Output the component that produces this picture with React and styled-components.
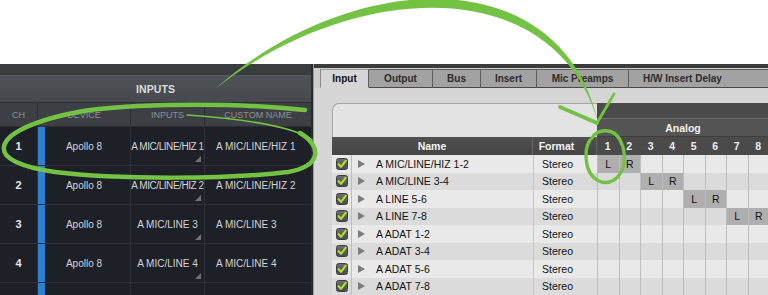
import React from "react";
import styled, { createGlobalStyle } from "styled-components";

const Global = createGlobalStyle`
  html, body { margin: 0; padding: 0; background: #ffffff; }
  body { font-family: "Liberation Sans", Arial, Helvetica, sans-serif; }
  #root { width: 768px; height: 295px; overflow: hidden; position: relative; }
  * { box-sizing: border-box; }
`;

const Page = styled.div`
  width: 768px;
  height: 295px;
  display: flex;
  flex-direction: column;
  position: relative;
  background: #ffffff;
`;

const WhiteSpace = styled.div`
  height: 64px;
  flex: none;
`;

const Main = styled.div`
  flex: 1;
  display: flex;
  min-height: 0;
`;

/* ---------- Left panel ---------- */
const LeftPanel = styled.div`
  width: 313px;
  flex: none;
  display: flex;
  flex-direction: column;
  background: #1d2027;
  border-right: 2px solid #2a2c30;
  overflow: hidden;
`;

const LeftTopBar = styled.div`
  height: 11px;
  flex: none;
  background: #3a3d40;
`;

const PanelTitle = styled.div`
  height: 28px;
  flex: none;
  display: flex;
  align-items: center;
  justify-content: center;
  background: linear-gradient(#4e5155, #46494d);
  border-top: 1px solid #55585c;
  border-bottom: 1px solid #2c2f33;
  color: #dcdddf;
  font-weight: bold;
  font-size: 10.5px;
  letter-spacing: 0.1px;
`;

const cols = `38px 93px 74px 1fr`;

const ColHeaders = styled.div`
  height: 24px;
  flex: none;
  display: grid;
  grid-template-columns: ${cols};
  background: #3c3f43;
  border-bottom: 1px solid #2a2d31;
`;

const ColHeader = styled.div`
  display: flex;
  align-items: center;
  justify-content: center;
  color: #8e9196;
  font-size: 9px;
  border-right: 1px solid #2b2e32;
  &:last-child { border-right: none; }
`;

const ChannelRow = styled.div`
  height: 39px;
  flex: none;
  display: grid;
  grid-template-columns: ${cols};
  border-bottom: 1px solid #2e3238;
`;

const ChCell = styled.div`
  display: flex;
  align-items: center;
  justify-content: center;
  color: #e6e7e9;
  font-weight: bold;
  font-size: 11px;
  border-right: 1px solid #2e3238;
`;

const DeviceCell = styled.div`
  display: flex;
  align-items: stretch;
  border-right: 1px solid #2e3238;
`;

const Stripe = styled.div`
  width: 7px;
  flex: none;
  background: #2f7fd3;
`;

const CellText = styled.div`
  flex: 1;
  display: flex;
  align-items: center;
  justify-content: ${(p) => (p.$left ? "flex-start" : "center")};
  padding-left: ${(p) => (p.$left ? "11px" : "0")};
  padding-right: ${(p) => (p.$pad ? p.$pad : 0)}px;
  color: #d2d4d8;
  font-size: 10px;
  white-space: nowrap;
  letter-spacing: ${(p) => (p.$tight ? "-0.45px" : "0")};
`;

const InputsCell = styled.div`
  position: relative;
  display: flex;
  border-right: 1px solid #2e3238;
`;

const CornerMark = styled.div`
  position: absolute;
  right: 3px;
  bottom: 3px;
  width: 0;
  height: 0;
  border-left: 6px solid transparent;
  border-bottom: 6px solid #6f7379;
`;

const CustomCell = styled.div`
  display: flex;
`;

/* ---------- Right panel ---------- */
const RightPanel = styled.div`
  flex: 1;
  display: flex;
  flex-direction: column;
  background: #d3d3d3;
  border-left: 1px solid #9c9c9c;
  min-width: 0;
`;

const RightTopBar = styled.div`
  height: 4px;
  flex: none;
  background: #3c3c3c;
`;

const TabBar = styled.div`
  height: 20px;
  flex: none;
  display: flex;
  align-items: flex-end;
  padding-left: 6px;
  background: #cdcdcd;
`;

const Tab = styled.div`
  height: 19px;
  width: ${(p) => p.$w}px;
  flex: none;
  display: flex;
  align-items: center;
  justify-content: ${(p) => (p.$start ? "flex-start" : "center")};
  padding-left: ${(p) => (p.$start ? "14px" : "0")};
  font-size: 10px;
  font-weight: bold;
  white-space: nowrap;
  color: ${(p) => (p.$active ? "#111" : "#2c2c2c")};
  background: ${(p) => (p.$active ? "#d6d6d6" : "#a2a2a2")};
  border: 1px solid #5c5c5c;
  border-left: ${(p) => (p.$first ? "1px solid #8a8a8a" : "none")};
  border-top-color: ${(p) => (p.$active ? "#9a9a9a" : "#5c5c5c")};
  border-bottom: ${(p) => (p.$active ? "1px solid #d6d6d6" : "1px solid #4a4a4a")};
`;

const Content = styled.div`
  flex: 1;
  padding: 15px 0 0 18px;
  background: #d6d6d6;
  display: flex;
  flex-direction: column;
  min-height: 0;
  overflow: hidden;
`;

const tableCols = `20px 181px 64px repeat(8, 21.5px)`;

const TableHead = styled.div`
  display: grid;
  grid-template-columns: 201px 64px 1fr;
  grid-template-rows: 16px 18px 18px;
  flex: none;
`;

const CaptionBox = styled.div`
  grid-column: 1 / 3;
  grid-row: 1 / 3;
  background: #e3e3e3;
  border: 1px solid #a6a6a6;
  border-bottom: none;
  border-right: none;
  border-top-left-radius: 7px;
`;

const MatrixTop = styled.div`
  grid-column: 3;
  grid-row: 1;
  background: #4b4b4b;
  border-bottom: 1px solid #6d6d6d;
`;

const GroupLabel = styled.div`
  grid-column: 3;
  grid-row: 2;
  background: #545454;
  display: flex;
  align-items: center;
  justify-content: center;
  color: #f2f2f2;
  font-weight: bold;
  font-size: 10.5px;
  border-bottom: 1px solid #3e3e3e;
`;

const HeadCell = styled.div`
  grid-row: 3;
  grid-column: ${(p) => p.$col};
  background: linear-gradient(#505050, #454545);
  display: flex;
  align-items: center;
  justify-content: center;
  padding-right: ${(p) => p.$pr || 0}px;
  color: #f4f4f4;
  font-weight: bold;
  font-size: 10.5px;
  border-right: 1px solid #666;
`;

const NumberRow = styled.div`
  grid-column: 3;
  grid-row: 3;
  display: grid;
  grid-template-columns: repeat(8, 21.5px);
  background: #4a4a4a;
`;

const NumberCell = styled.div`
  display: flex;
  align-items: center;
  justify-content: center;
  color: #eeeeee;
  font-weight: bold;
  font-size: 10.5px;
`;

const DataRow = styled.div`
  height: 17.5px;
  flex: none;
  display: grid;
  grid-template-columns: ${tableCols};
  background: ${(p) => (p.$odd ? "#e9e9e9" : "#dbdbdb")};
`;

const CheckCell = styled.div`
  display: flex;
  align-items: center;
  justify-content: center;
  border-right: 1px solid #bcbcbc;
`;

const CheckBox = styled.div`
  width: 12px;
  height: 12px;
  border-radius: 2.5px;
  background: linear-gradient(#6d6d6d, #4c4c4c);
  border: 1px solid #3d3d3d;
  display: flex;
  align-items: center;
  justify-content: center;
`;

const NameCell = styled.div`
  display: flex;
  align-items: center;
  padding-left: 6px;
  gap: 11px;
  color: #111;
  font-size: 10.5px;
  white-space: nowrap;
`;

const Disclosure = styled.div`
  width: 0;
  height: 0;
  border-top: 4px solid transparent;
  border-bottom: 4px solid transparent;
  border-left: 7px solid #7c7c7c;
`;

const FormatCell = styled.div`
  display: flex;
  align-items: center;
  justify-content: center;
  padding-right: 16px;
  border-left: 1px solid #c6c6c6;
  color: #111;
  font-size: 10.5px;
`;

const MatrixCell = styled.div`
  display: flex;
  align-items: center;
  justify-content: center;
  border-left: 1px solid #bdbdbd;
  background: ${(p) => (p.$on ? "#afafaf" : "transparent")};
  color: #111;
  font-size: 10.5px;
`;

/* ---------- Annotation overlay ---------- */
const Overlay = styled.svg`
  position: absolute;
  left: 0;
  top: 0;
  width: 768px;
  height: 295px;
  pointer-events: none;
`;

const GREEN = "#73c243";

const channels = [
  { ch: "1", input: "A MIC/LINE/HIZ 1", name: "A MIC/LINE/HIZ 1", tight: true },
  { ch: "2", input: "A MIC/LINE/HIZ 2", name: "A MIC/LINE/HIZ 2", tight: true },
  { ch: "3", input: "A MIC/LINE 3", name: "A MIC/LINE 3" },
  { ch: "4", input: "A MIC/LINE 4", name: "A MIC/LINE 4" },
  { ch: "", input: "", name: "" },
];

const tabs = [
  { label: "Input", w: 49, active: true },
  { label: "Output", w: 64 },
  { label: "Bus", w: 48 },
  { label: "Insert", w: 56 },
  { label: "Mic Preamps", w: 92 },
  { label: "H/W Insert Delay", w: 150, start: true },
];

const rows = [
  { name: "A MIC/LINE/HIZ 1-2", lr: 0 },
  { name: "A MIC/LINE 3-4", lr: 2 },
  { name: "A LINE 5-6", lr: 4 },
  { name: "A LINE 7-8", lr: 6 },
  { name: "A ADAT 1-2" },
  { name: "A ADAT 3-4" },
  { name: "A ADAT 5-6" },
  { name: "A ADAT 7-8" },
];

function Check() {
  return (
    <CheckBox>
      <svg width="10" height="10" viewBox="0 0 10 10">
        <path d="M1.6 5.2 L4 7.8 L8.6 1.8" fill="none" stroke="#a8e22c" strokeWidth="2.1" strokeLinecap="round" strokeLinejoin="round" />
      </svg>
    </CheckBox>
  );
}

export default function App() {
  return (
    <>
      <Global />
      <Page>
        <WhiteSpace />
        <Main>
          <LeftPanel>
            <LeftTopBar />
            <PanelTitle>INPUTS</PanelTitle>
            <ColHeaders>
              <ColHeader>CH</ColHeader>
              <ColHeader>DEVICE</ColHeader>
              <ColHeader>INPUTS</ColHeader>
              <ColHeader>CUSTOM NAME</ColHeader>
            </ColHeaders>
            {channels.map((c, i) => (
              <ChannelRow key={i}>
                <ChCell>{c.ch}</ChCell>
                <DeviceCell>
                  <Stripe />
                  <CellText $pad={7}>{c.ch ? "Apollo 8" : ""}</CellText>
                </DeviceCell>
                <InputsCell>
                  <CellText $tight={c.tight}>{c.input}</CellText>
                  {c.ch && <CornerMark />}
                </InputsCell>
                <CustomCell>
                  <CellText $left>{c.name}</CellText>
                </CustomCell>
              </ChannelRow>
            ))}
          </LeftPanel>

          <RightPanel>
            <RightTopBar />
            <TabBar>
              {tabs.map((t, i) => (
                <Tab key={t.label} $w={t.w} $active={t.active} $first={i === 0} $start={t.start}>
                  {t.label}
                </Tab>
              ))}
            </TabBar>
            <Content>
              <TableHead>
                <CaptionBox />
                <MatrixTop />
                <GroupLabel>Analog</GroupLabel>
                <HeadCell $col={1}>Name</HeadCell>
                <HeadCell $col={2} $pr={16}>Format</HeadCell>
                <NumberRow>
                  {[1, 2, 3, 4, 5, 6, 7, 8].map((n) => (
                    <NumberCell key={n}>{n}</NumberCell>
                  ))}
                </NumberRow>
              </TableHead>
              {rows.map((r, i) => (
                <DataRow key={r.name} $odd={i % 2 === 0}>
                  <CheckCell>
                    <Check />
                  </CheckCell>
                  <NameCell>
                    <Disclosure />
                    {r.name}
                  </NameCell>
                  <FormatCell>Stereo</FormatCell>
                  {Array.from({ length: 8 }).map((_, k) => {
                    const on = r.lr !== undefined && (k === r.lr || k === r.lr + 1);
                    return (
                      <MatrixCell key={k} $on={on}>
                        {on ? (k === r.lr ? "L" : "R") : ""}
                      </MatrixCell>
                    );
                  })}
                </DataRow>
              ))}
            </Content>
          </RightPanel>
        </Main>

        <Overlay viewBox="0 0 768 295">
          {/* big arc arrow */}
          <path d="M215,89 C350,-31 560,-42 598,122 C554,-30 352,-19 215,89 Z" fill={GREEN} />
          <path d="M560,107 L597,123" fill="none" stroke={GREEN} strokeWidth="3.8" strokeLinecap="round" />
          <path d="M597,123 L614,94" fill="none" stroke={GREEN} strokeWidth="2.8" strokeLinecap="round" />
          {/* loop around channel 1 */}
          <path d="M187,115 C230,118 290,124 312,140" fill="none" stroke={GREEN} strokeWidth="1.6" strokeLinecap="round" />
          <path
            d="M300,133 C322,146 322,166 288,172 C230,179 120,180 55,172 C20,167 2,158 4,147 C6,132 40,118 90,110 C150,103 240,103 305,110"
            fill="none"
            stroke={GREEN}
            strokeWidth="4.5"
            strokeLinecap="round"
          />
          {/* small loop around cell 1 */}
          <path
            d="M592,138 C598,128 614,128 620,140 C627,153 626,172 614,180 C602,187 590,178 587,165 C585,155 586,146 590,140"
            fill="none"
            stroke={GREEN}
            strokeWidth="3.4"
            strokeLinecap="round"
          />
        </Overlay>
      </Page>
    </>
  );
}
